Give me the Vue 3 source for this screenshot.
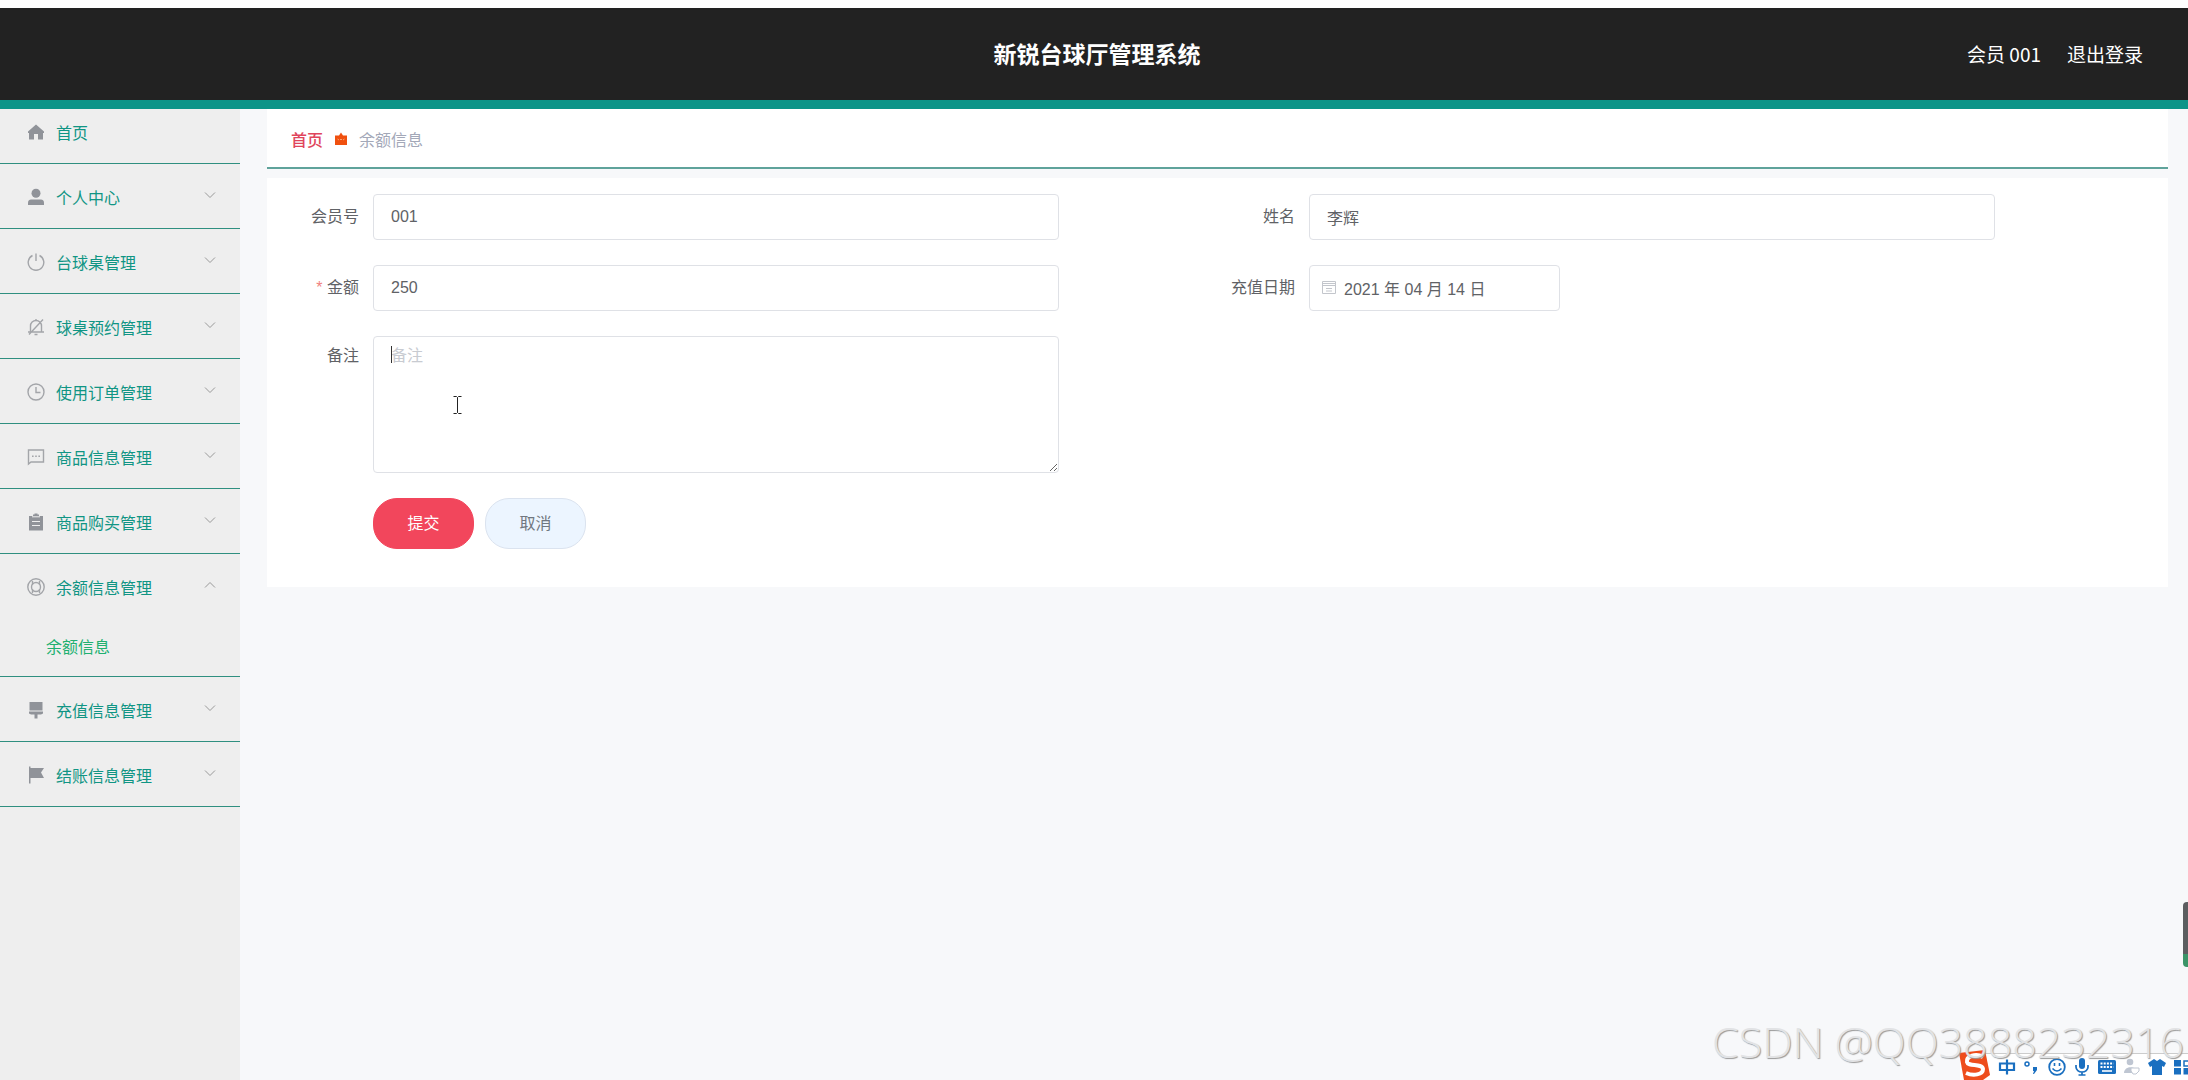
<template>
  <div class="page">
    <header class="topbar">
      <h1 class="title">新锐台球厅管理系统</h1>
      <nav class="account">
        <span>会员 001</span>
        <a href="#">退出登录</a>
      </nav>
    </header>
    <div class="body">
      <aside class="sidebar">
        <ul class="menu">
          <li v-for="item in menus" :key="item.name" class="menu-item" :class="{ home: item.home }">
            <a href="#" class="menu-link">
              <svg class="menu-icon" viewBox="0 0 18 18" v-html="icons[item.icon]"></svg>
              <span>{{ item.name }}</span>
              <svg v-if="!item.home" class="arrow" :class="{ open: item.children }" viewBox="0 0 12 8">
                <path d="M1 1.5l5 5 5-5" fill="none" stroke="#999" />
              </svg>
            </a>
            <a v-for="child in item.children" :key="child" href="#" class="sub-link">{{ child }}</a>
          </li>
        </ul>
      </aside>
      <main class="content">
        <nav class="breadcrumb">
          <a href="#">首页</a>
          <svg class="crumb-icon" viewBox="0 0 14 14">
            <path fill="#f0500f" d="M1 3.500h4L7 .5l2 3h4V13H1z" />
            <path d="M3.500 7l1.500 1M10.500 7L9 8M6 7.500h2" fill="none" stroke="#f8a070" />
          </svg>
          <span>余额信息</span>
        </nav>
        <form class="card" @submit.prevent>
          <div class="field">
            <label for="account">会员号</label>
            <input id="account" v-model="form.account" type="text" />
          </div>
          <div class="field">
            <label for="name">姓名</label>
            <input id="name" v-model="form.name" type="text" />
          </div>
          <div class="field">
            <label for="amount"><span class="required">*</span> 金额</label>
            <input id="amount" v-model="form.amount" type="text" />
          </div>
          <div class="field">
            <label for="date">充值日期</label>
            <div class="date">
              <svg class="date-icon" viewBox="0 0 16 16" fill="none" stroke="#c3c6cc">
                <path d="M1.500 1.500h13v12h-13zM1.500 3.500h13M1.500 5.500h13M5 8.500h6M5 11h6" />
              </svg>
              <input id="date" v-model="form.date" type="text" />
            </div>
          </div>
          <div class="field remark">
            <label for="remark">备注</label>
            <div class="remark-box">
              <textarea id="remark" v-model="form.remark" placeholder="备注"></textarea>
              <i class="caret"></i>
              <svg class="pointer" viewBox="0 0 9 18">
                <path d="M.5.5h3l1 1 1-1h3M4.500 1.500v15M.5 17.500h3l1-1 1 1h3" fill="none" stroke="#222" />
              </svg>
            </div>
          </div>
          <div class="actions">
            <button type="submit" class="btn primary">提交</button>
            <button type="button" class="btn">取消</button>
          </div>
        </form>
      </main>
    </div>
    <div class="side-handle"></div>
    <div class="ime">
      <svg class="ime-logo" viewBox="0 0 32 30">
        <path fill="#ee4d1c" d="M1 3L27 0l5 25-7 5H6z" />
        <path d="M25 7C18 3 8 6 9 12c1 5 15 1 16 7 0 6-10 7-17 4" fill="none" stroke="#fff" stroke-width="4" />
      </svg>
      <svg v-for="(tool, i) in imeTools" :key="i" class="ime-tool" viewBox="0 0 18 18" v-html="tool"></svg>
    </div>
    <div class="watermark">CSDN @QQ3888232316</div>
  </div>
</template>

<script setup>
import { reactive } from 'vue'

const form = reactive({
  account: '001',
  name: '李辉',
  amount: '250',
  date: '2021 年 04 月 14 日',
  remark: ''
})

const menus = [
  { name: '首页', icon: 'home', home: true },
  { name: '个人中心', icon: 'user' },
  { name: '台球桌管理', icon: 'power' },
  { name: '球桌预约管理', icon: 'bell' },
  { name: '使用订单管理', icon: 'clock' },
  { name: '商品信息管理', icon: 'chat' },
  { name: '商品购买管理', icon: 'order' },
  { name: '余额信息管理', icon: 'help', children: ['余额信息'] },
  { name: '充值信息管理', icon: 'brush' },
  { name: '结账信息管理', icon: 'flag' }
]

const line = 'fill="none" stroke="#a3a5a9" stroke-width="1.4"'
const solid = 'fill="#909399"'

const icons = {
  home: `<path ${solid} d="M9 1.500L1 8.500V10h1v6.500h5V11h4v5.500h5V10h1V8.500z"/>`,
  user: `<circle ${solid} cx="9" cy="5.200" r="4.500"/><path ${solid} d="M1 17v-2.500C1 12.500 2.500 11.500 4 11.500h10c1.500 0 3 1 3 3V17z"/>`,
  power: `<path ${line} d="M5.500 2.500a7.800 7.800 0 1 0 7 0M9 .5V8"/>`,
  bell: `<path ${line} d="M3.500 13.500V8a5.500 5.500 0 0 1 11 0v5.500M1 14h16M9 1v1.500M7.500 16.500h3M2 16.500L16 1.500"/>`,
  clock: `<circle ${line} cx="9" cy="9" r="8"/><path ${line} d="M9 4v5.500h4.500"/>`,
  chat: `<path ${line} d="M1.500 16V2h15v12H4z"/><path ${line} stroke-dasharray="1.600 1.600" d="M5 8.200h8"/>`,
  order: `<path ${solid} d="M2 3h4V1.500h1.500V.5h3v1H12V3h4v14.500H2z"/><path d="M5 3.800h8M5 8.500h8M5 12.500h8" stroke="#eee"/>`,
  help: `<circle ${line} cx="9" cy="9" r="8.200"/><circle ${line} cx="9" cy="9" r="4.500"/><path ${line} d="M5.500 3v4M12.500 3v4M5.500 11v4M12.500 11v4"/>`,
  brush: `<path ${solid} d="M2.500 1h13v8.500h-13zM2 10.500h14v2l-2 1h-3.500v4h-3v-4H4l-2-1z"/>`,
  flag: `<path ${solid} d="M2 .5h1.500V2H17l-3 4.500 3 5.500H3.500v5.500H2z"/>`
}

// 输入法工具条图标
const imeTools = [
  '<path d="M2 5.500h14v6.500H2zM9 1.500v15" fill="none" stroke="#1a6fc0" stroke-width="2.200"/>',
  '<circle cx="4" cy="6" r="2" fill="none" stroke="#1a6fc0" stroke-width="1.500"/><path d="M10 9h4v3l-3 4h-1l1-3h-1z" fill="#1a6fc0"/>',
  '<circle cx="9" cy="9" r="7.800" fill="none" stroke="#1a6fc0" stroke-width="1.800"/><path d="M6.500 5v3M11.500 5v3M4.500 10.500q4.500 5 9 0" fill="none" stroke="#1a6fc0" stroke-width="1.600"/>',
  '<rect x="6" y="0" width="6" height="11" rx="3" fill="#1a6fc0"/><path d="M3 7v2a6 5 0 0 0 12 0V7M9 14v3M5.500 17h7" fill="none" stroke="#1a6fc0" stroke-width="1.700"/>',
  '<rect x="0" y="2" width="18" height="14" rx="1.500" fill="#1a6fc0"/><path d="M2.500 5.500h13M2.500 9h13" stroke="#fff" stroke-width="2" stroke-dasharray="2 1.200"/><path d="M4 13h10" stroke="#fff" stroke-width="1.600"/>',
  '<circle cx="7" cy="4" r="3.300" fill="#bfc6d2"/><path d="M1 15c0-7 11-7 12-3l-3 3z" fill="#bfc6d2"/><path d="M8 10h8v3l-3 3h-3l-2-3z" fill="#fff" stroke="#bfc6d2"/>',
  '<path d="M6 1l3 2 3-2 6 4-2 4-2-1v9H4V8L2 9 0 5z" fill="#1a6fc0"/>',
  '<path d="M1 2h7v6.500H1zM1 10h7v6.500H1zM10.500 10h7v6.500h-7z" fill="#1a6fc0"/><path d="M11 3h6v5h-6z" fill="none" stroke="#1a6fc0" stroke-width="1.500"/>'
]
</script>

<style>
body {
  margin: 0;
  background: #f7f8fa;
}
</style>

<style scoped>
* {
  box-sizing: border-box;
}
.page {
  position: relative;
  display: flex;
  flex-direction: column;
  min-height: 100vh;
  padding-top: 8px;
  overflow: hidden;
  background: #fff;
  font-family: "Liberation Sans", "Noto Sans CJK SC", sans-serif;
  font-size: 16px;
  color: #606266;
}
a {
  color: inherit;
  text-decoration: none;
}
.topbar {
  display: grid;
  grid-template-columns: 1fr auto 1fr;
  align-items: center;
  height: 101px;
  padding: 0 45px 2px 51px;
  border-bottom: 9px solid #0c9488;
  background: #222;
  color: #fff;
  font-family: "Noto Sans CJK SC", sans-serif;
}
.title {
  grid-column: 2;
  margin: 0;
  font-size: 23px;
  font-weight: 700;
}
.account {
  display: flex;
  justify-content: flex-end;
  gap: 26px;
  font-size: 19px;
}
.body {
  display: flex;
  flex: 1;
  background: #f7f8fa;
}
.sidebar {
  flex: none;
  width: 240px;
  background: #eee;
  color: #109584;
}
.menu {
  margin: 0;
  padding: 0;
  list-style: none;
}
.menu-item {
  border-bottom: 1px solid #2f8f80;
}
.menu-link {
  display: flex;
  align-items: center;
  gap: 11px;
  height: 64px;
  padding: 2px 24px 0 27px;
}
.home .menu-link {
  height: 54px;
  padding-bottom: 10px;
}
.menu-icon {
  flex: none;
  width: 18px;
  height: 18px;
}
.arrow {
  width: 12px;
  height: 8px;
  margin: 0 0 4px auto;
}
.arrow.open {
  transform: rotate(180deg);
}
.sub-link {
  display: block;
  height: 58px;
  padding-left: 46px;
  line-height: 60px;
  color: #20b070;
}
.content {
  flex: 1;
  padding: 0 20px 0 27px;
}
.breadcrumb {
  display: flex;
  align-items: center;
  gap: 11px;
  height: 60px;
  padding: 2px 24px 0;
  border-bottom: 2px solid #5fa39b;
  background: #fff;
  color: #a3a8b8;
}
.breadcrumb a {
  color: #e0455c;
  font-weight: 500;
}
.crumb-icon {
  width: 14px;
  height: 14px;
}
.card {
  display: grid;
  grid-template-columns: 1fr 1fr;
  row-gap: 25px;
  margin-top: 9px;
  padding: 16px 15px 38px 14px;
  background: #fff;
}
.field {
  display: grid;
  grid-template-columns: 92px 13fr 3fr;
}
.field label {
  padding-right: 14px;
  line-height: 46px;
  text-align: right;
}
.required {
  color: #f08080;
}
.field input,
.field textarea {
  display: block;
  width: 100%;
  height: 46px;
  padding: 0 17px 1px;
  border: 1px solid #dfe1e6;
  border-radius: 4px;
  background: #fff;
  color: #606266;
  font: inherit;
  outline: none;
}
.date {
  position: relative;
  width: 251px;
}
.field .date input {
  padding-left: 34px;
}
.date-icon {
  position: absolute;
  top: 15px;
  left: 12px;
  width: 16px;
  height: 16px;
}
.remark {
  grid-column: 1;
}
.remark label {
  line-height: 40px;
}
.remark-box {
  position: relative;
}
.field textarea {
  height: 137px;
  padding: 5px 17px;
  resize: vertical;
}
textarea::placeholder {
  color: #c8cbd1;
}
.caret {
  position: absolute;
  top: 10px;
  left: 18px;
  width: 1px;
  height: 17px;
  background: #333;
}
.pointer {
  position: absolute;
  top: 60px;
  left: 80px;
  width: 9px;
  height: 18px;
}
.actions {
  grid-column: 1 / -1;
  display: flex;
  gap: 11px;
  padding-left: 92px;
}
.btn {
  width: 101px;
  height: 51px;
  padding: 0 0 4px;
  border: 1px solid #dbe3ef;
  border-radius: 24px;
  background: #ecf5ff;
  color: #707780;
  font: inherit;
}
.btn.primary {
  border-color: #f2465c;
  background: #f2465c;
  color: #fff;
}
.side-handle {
  position: absolute;
  top: 902px;
  right: 0;
  width: 5px;
  height: 65px;
  border-radius: 4px 0 0 4px;
  background: linear-gradient(#5c5e60 80%, #3c9468 80%);
}
.ime {
  position: absolute;
  right: -3px;
  bottom: 0;
  display: flex;
  align-items: center;
  gap: 7px;
  height: 27px;
  padding-left: 38px;
  border-top: 1px solid #ccc;
  background: #fff;
}
.ime-logo {
  position: absolute;
  bottom: 0;
  left: -2px;
  width: 32px;
  height: 30px;
}
.ime-tool {
  width: 18px;
  height: 18px;
}
.watermark {
  position: absolute;
  right: 4px;
  bottom: 14px;
  font-family: "Open Sans", "Noto Sans", sans-serif;
  font-size: 43px;
  font-weight: 300;
  line-height: 48px;
  color: #e2e3e5;
  text-shadow: 1px 1px 1px #999;
  white-space: nowrap;
}
</style>
